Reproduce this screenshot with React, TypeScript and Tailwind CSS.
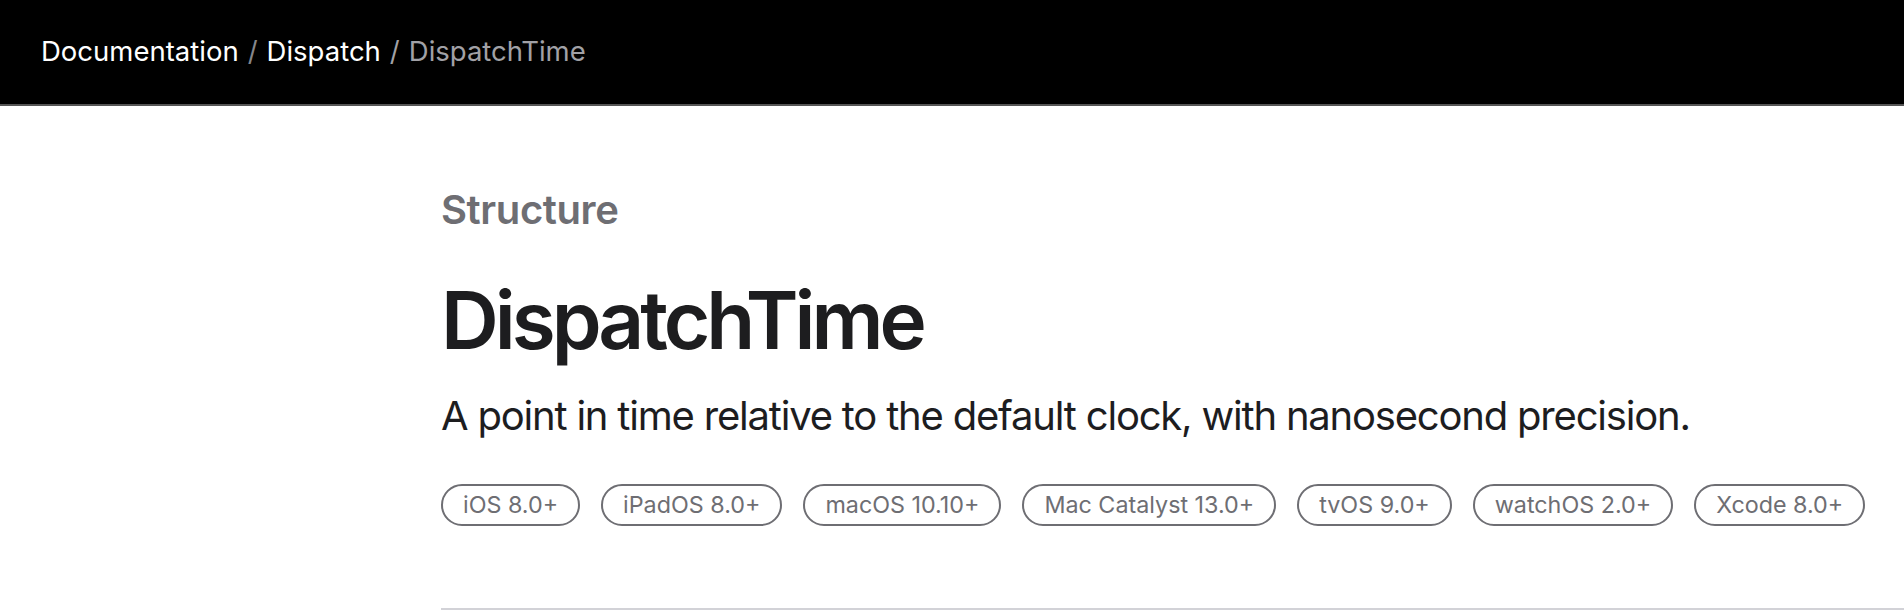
import React from "react";

const pills = [
  "iOS 8.0+",
  "iPadOS 8.0+",
  "macOS 10.10+",
  "Mac Catalyst 13.0+",
  "tvOS 9.0+",
  "watchOS 2.0+",
  "Xcode 8.0+",
];

export default function App() {
  return (
    <div className="min-h-[614px] w-full overflow-hidden bg-white font-['Inter',_'Noto_Sans',_sans-serif]">
      <header className="flex h-[106px] items-center border-b-2 border-[#555555] bg-black pl-[41px]">
        <nav className="flex items-center text-[27.5px] leading-none">
          <span className="text-white">Documentation</span>
          <span className="mx-[9px] text-[#86868b]">/</span>
          <span className="text-white">Dispatch</span>
          <span className="mx-[9px] text-[#a1a1a6]">/</span>
          <span className="text-[#a1a1a6]">DispatchTime</span>
        </nav>
      </header>
      <main className="pl-[441px]">
        <div className="pt-[84px] text-[40px] font-semibold leading-none tracking-[-0.01em] text-[#6e6e73]">
          Structure
        </div>
        <h1 className="mt-[50px] text-[80px] font-semibold leading-none tracking-[-0.05em] text-[#1d1d1f] whitespace-nowrap">
          DispatchTime
        </h1>
        <p className="mt-[36px] whitespace-nowrap text-[40px] leading-none tracking-[-0.03em] text-[#1d1d1f]">
          A point in time relative to the default clock, with nanosecond precision.
        </p>
        <div className="mt-[48px] flex gap-[21px] whitespace-nowrap">
          {pills.map((p) => (
            <span
              key={p}
              className="flex h-[42px] items-center rounded-full border-2 border-[#6e6e73] px-[20px] text-[23.3px] leading-none text-[#6e6e73]"
            >
              {p}
            </span>
          ))}
        </div>
        <div className="mt-[82px] h-[2px] w-full bg-[#d2d2d7]" />
      </main>
    </div>
  );
}
